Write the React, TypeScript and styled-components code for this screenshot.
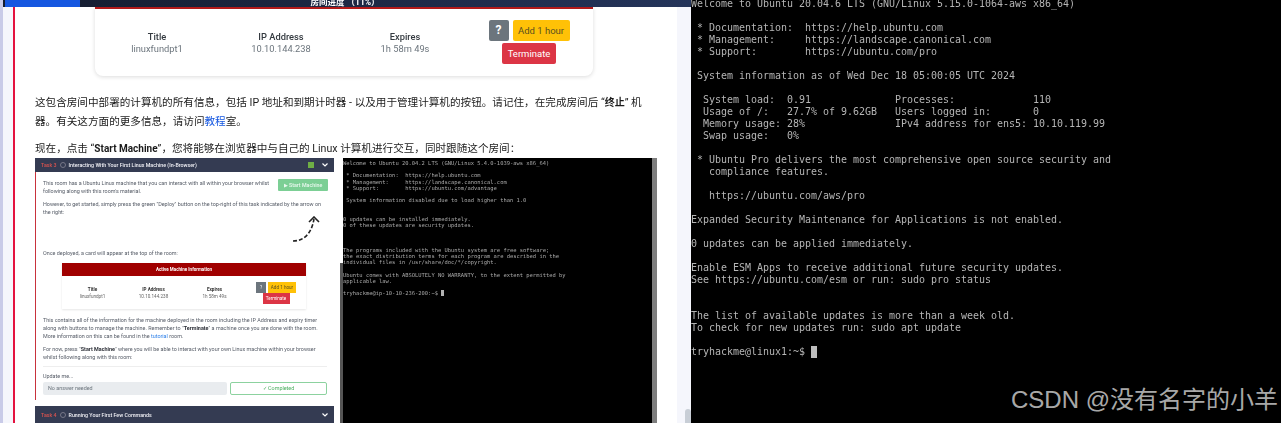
import React from "react";
import styled, { createGlobalStyle } from "styled-components";

const Global = createGlobalStyle`
  html, body { margin: 0; padding: 0; background: #000; }
  body { font-family: "Roboto", "Noto Sans CJK SC", sans-serif; }
`;

const Page = styled.div`
  position: relative;
  width: 1281px;
  height: 423px;
  display: flex;
  overflow: hidden;
`;

const LeftPane = styled.div`
  width: 691px;
  flex: none;
  height: 423px;
  overflow: hidden;
  position: relative;
  background: #f5f6fc;
  display: flex;
  flex-direction: column;
  border-left: 3px solid #c9cbe8;
  box-sizing: border-box;
`;

const ProgressTrack = styled.div`
  height: 7px;
  flex: none;
  background: linear-gradient(90deg, #141c2e, #24345a);
  display: flex;
  justify-content: center;
  position: relative;
  overflow: hidden;
`;

const ProgressFill = styled.div`
  position: absolute;
  left: 2px;
  top: 0;
  bottom: 0;
  width: 75px;
  background: #1557e0;
`;

const ProgressLabel = styled.span`
  color: #fff;
  font: 700 8.5px/5px "Roboto", "Noto Sans CJK SC", sans-serif;
  position: relative;
  margin-left: -4px;
  filter: blur(0.3px);
`;

const Sheet = styled.div`
  width: 664px;
  margin-left: 10px;
  flex: 1;
  background: #fff;
  border-left: 2px solid #e4123f;
  box-sizing: border-box;
  padding-left: 20px;
  min-height: 0;
`;

const Card = styled.div`
  width: 498px;
  height: 69px;
  margin-left: 60px;
  border-top: 2px solid #b11a1a;
  border-radius: 0 0 8px 8px;
  box-shadow: 0 1px 4px rgba(0, 0, 0, 0.14);
  box-sizing: border-box;
  display: flex;
  background: #fff;
`;

const InfoCol = styled.div`
  width: 124px;
  text-align: center;
  padding-top: 22px;
  font: 400 9.3px/12px "Roboto", sans-serif;
  color: #6c757d;
  filter: blur(0.25px);
`;

const InfoHead = styled.div`
  color: #343a40;
  font-weight: 500;
`;

const Actions = styled.div`
  margin-left: 21px;
  width: 82px;
  padding-top: 11px;
  display: flex;
  flex-wrap: wrap;
  justify-content: center;
  align-content: flex-start;
  gap: 2px 4px;
`;

const Btn = styled.div<{ $bg: string; $fg: string; $w: number }>`
  width: ${(p) => p.$w}px;
  height: 21px;
  border-radius: 2px;
  background: ${(p) => p.$bg};
  color: ${(p) => p.$fg};
  font: 400 9.5px/21px "Roboto", sans-serif;
  text-align: center;
`;

const QIcon = styled.span`
  font: 700 12px/21px "Roboto", sans-serif;
`;

const Para = styled.p<{ $top: number }>`
  margin: ${(p) => p.$top}px 0 0;
  width: 612px;
  font: 400 10.6px/19px "Roboto", "Noto Sans CJK SC", sans-serif;
  color: #1b1b1b;
  filter: blur(0.25px);
  strong { font-weight: 700; font-size: 10px; }
  a { color: #1557e0; text-decoration: none; }
`;

const Shot = styled.div`
  display: flex;
  width: 622px;
  height: 265px;
  overflow: hidden;
`;

const Room = styled.div`
  width: 308px;
  flex: none;
  background: #fff;
  position: relative;
  filter: blur(0.5px);
`;

const RoomBar = styled.div`
  width: 299px;
  height: 14px;
  background: #343b52;
  display: flex;
  align-items: center;
  padding: 0 6px;
  box-sizing: border-box;
  font: 500 5.3px/14px "Roboto", sans-serif;
  color: #f0f0f5;
  gap: 2px;
  em { font-style: normal; color: #d9534f; }
`;

const Ring = styled.i`
  width: 4px;
  height: 4px;
  border: 1px solid #778;
  border-radius: 50%;
  margin: 0 1px;
`;

const Spacer = styled.span`
  flex: 1;
`;

const Save = styled.i`
  width: 6px;
  height: 6px;
  background: #6fae45;
  margin-right: 6px;
`;

const Chevron = styled.svg`
  width: 6px;
  height: 4px;
`;

const RoomBody = styled.div`
  width: 299px;
  height: 228px;
  border-left: 1px solid #c8323c;
  box-sizing: border-box;
  padding: 7px 7px 0 7px;
  position: relative;
  font: 400 5.42px/8px "Roboto", sans-serif;
  color: #555b66;
`;

const RoomPara = styled.p<{ $top?: number; $w?: number }>`
  margin: ${(p) => p.$top ?? 0}px 0 0;
  width: ${(p) => p.$w ?? 286}px;
  strong { color: #2d3038; }
  a { color: #2f80e8; text-decoration: none; }
`;

const StartButton = styled.div`
  position: absolute;
  top: 7px;
  right: 6px;
  width: 50px;
  height: 12px;
  background: #7ccf95;
  color: #e8f8ee;
  font: 500 5.3px/12px "Roboto", sans-serif;
  text-align: center;
  border-radius: 1px;
`;

const Arrow = styled.svg`
  position: absolute;
  left: 256px;
  top: 44px;
  width: 30px;
  height: 28px;
`;

const MiniCard = styled.div`
  width: 244px;
  height: 46px;
  margin: 6px 0 0 19px;
  box-shadow: 0 1px 2px rgba(0, 0, 0, 0.1);
  position: relative;
`;

const MiniHead = styled.div`
  height: 13px;
  background: #a00000;
  color: #fff;
  text-align: center;
  font: 700 4.5px/13px "Roboto", sans-serif;
`;

const MiniRow = styled.div`
  display: flex;
  padding-top: 10px;
`;

const MiniCol = styled.div`
  width: 61px;
  text-align: center;
  font: 400 4.6px/7px "Roboto", sans-serif;
  color: #666;
  b { display: block; color: #333; }
`;

const MiniActions = styled.div`
  position: absolute;
  left: 193px;
  top: 19px;
  width: 42px;
  display: flex;
  flex-wrap: wrap;
  justify-content: center;
  gap: 0 2px;
`;

const MiniBtn = styled.div<{ $bg: string; $fg: string; $w: number }>`
  width: ${(p) => p.$w}px;
  height: 11px;
  background: ${(p) => p.$bg};
  color: ${(p) => p.$fg};
  font: 400 4.6px/11px "Roboto", sans-serif;
  text-align: center;
`;

const Rule = styled.div`
  height: 1px;
  background: #eee;
  margin-top: 5px;
`;

const AnswerRow = styled.div`
  display: flex;
  gap: 3px;
  margin-top: 2px;
`;

const AnswerInput = styled.div`
  width: 186px;
  height: 13px;
  background: #e9ecef;
  border-radius: 2px;
  padding-left: 5px;
  box-sizing: border-box;
  font: 400 5.4px/13px "Roboto", sans-serif;
  color: #6c757d;
`;

const AnswerDone = styled.div`
  width: 98px;
  height: 13px;
  border: 1px solid #8cd29f;
  border-radius: 2px;
  box-sizing: border-box;
  font: 400 5.4px/11px "Roboto", sans-serif;
  text-align: center;
  color: #4caf60;
`;

const NextBar = styled(RoomBar)`
  height: 17px;
  margin-top: 6px;
`;

const RoomScroll = styled.div`
  position: absolute;
  right: 0;
  top: 105px;
  bottom: 0;
  width: 3px;
  background: #555;
`;

const MiniTerm = styled.div`
  width: 309px;
  flex: none;
  background: #000;
  color: #a8a8a8;
  overflow: hidden;
`;

const MiniPre = styled.pre`
  margin: 0;
  font: 400 5.45px/6.2px "DejaVu Sans Mono", monospace;
  padding-top: 2px;
  filter: blur(0.4px);
`;

const MiniCursor = styled.span`
  display: inline-block;
  width: 3px;
  height: 6px;
  background: #b4b4b4;
  vertical-align: top;
`;

const TermScroll = styled.div`
  width: 5px;
  flex: none;
  background: #7d7d7d;
`;

const PageScroll = styled.div`
  position: absolute;
  right: 0;
  bottom: 0;
  width: 6px;
  height: 14px;
  background: #c8ced6;
  border-radius: 3px 3px 0 0;
`;

const Terminal = styled.div`
  flex: 1;
  background: #000;
  overflow: hidden;
`;

const TermPre = styled.pre`
  margin: -2px 0 0;
  font: 400 9.97px/12px "DejaVu Sans Mono", monospace;
  color: #b5b5b5;
  filter: blur(0.2px);
`;

const Cursor = styled.span`
  display: inline-block;
  width: 6px;
  height: 12px;
  background: #bdbdbd;
  vertical-align: top;
`;

const Watermark = styled.div`
  position: absolute;
  right: 3px;
  bottom: 8px;
  font: 400 24px/30px "Liberation Sans", "Noto Sans CJK SC", sans-serif;
  color: rgba(255, 255, 255, 0.68);
  white-space: nowrap;
`;

const miniText = `Welcome to Ubuntu 20.04.2 LTS (GNU/Linux 5.4.0-1039-aws x86_64)

 * Documentation:  https://help.ubuntu.com
 * Management:     https://landscape.canonical.com
 * Support:        https://ubuntu.com/advantage

 System information disabled due to load higher than 1.0


0 updates can be installed immediately.
0 of these updates are security updates.



The programs included with the Ubuntu system are free software;
the exact distribution terms for each program are described in the
individual files in /usr/share/doc/*/copyright.

Ubuntu comes with ABSOLUTELY NO WARRANTY, to the extent permitted by
applicable law.

tryhackme@ip-10-10-236-200:~$ `;

const termText = `Welcome to Ubuntu 20.04.6 LTS (GNU/Linux 5.15.0-1064-aws x86_64)

 * Documentation:  https://help.ubuntu.com
 * Management:     https://landscape.canonical.com
 * Support:        https://ubuntu.com/pro

 System information as of Wed Dec 18 05:00:05 UTC 2024

  System load:  0.91              Processes:             110
  Usage of /:   27.7% of 9.62GB   Users logged in:       0
  Memory usage: 28%               IPv4 address for ens5: 10.10.119.99
  Swap usage:   0%

 * Ubuntu Pro delivers the most comprehensive open source security and
   compliance features.

   https://ubuntu.com/aws/pro

Expanded Security Maintenance for Applications is not enabled.

0 updates can be applied immediately.

Enable ESM Apps to receive additional future security updates.
See https://ubuntu.com/esm or run: sudo pro status


The list of available updates is more than a week old.
To check for new updates run: sudo apt update

tryhackme@linux1:~$ `;

const TaskChevron = () => (
  <Chevron viewBox="0 0 6 4">
    <path d="M0.5 0.5 L3 3 L5.5 0.5" fill="none" stroke="#fff" strokeWidth="1.2" />
  </Chevron>
);

export default function App() {
  return (
    <Page>
      <Global />
      <LeftPane>
        <ProgressTrack>
          <ProgressFill />
          <ProgressLabel>房间进度 （11%）</ProgressLabel>
        </ProgressTrack>
        <Sheet>
          <Card>
            <InfoCol>
              <InfoHead>Title</InfoHead>
              linuxfundpt1
            </InfoCol>
            <InfoCol>
              <InfoHead>IP Address</InfoHead>
              10.10.144.238
            </InfoCol>
            <InfoCol>
              <InfoHead>Expires</InfoHead>
              1h 58m 49s
            </InfoCol>
            <Actions>
              <Btn $bg="#6c757d" $fg="#fff" $w={20}>
                <QIcon>?</QIcon>
              </Btn>
              <Btn $bg="#ffc107" $fg="#5b5020" $w={57}>
                Add 1 hour
              </Btn>
              <Btn $bg="#dc3545" $fg="#fff" $w={54}>
                Terminate
              </Btn>
            </Actions>
          </Card>
          <Para $top={17}>
            这包含房间中部署的计算机的所有信息，包括 IP 地址和到期计时器 - 以及用于管理计算机的按钮。请记住，在完成房间后 “<strong>终止</strong>” 机器。有关这方面的更多信息，请访问<a>教程</a>室。
          </Para>
          <Para $top={8}>
            现在，点击 “<strong>Start Machine</strong>”，您将能够在浏览器中与自己的 Linux 计算机进行交互，同时跟随这个房间：
          </Para>
          <Shot>
            <Room>
              <RoomBar>
                <em>Task 3</em>
                <Ring />
                Interacting With Your First Linux Machine (In-Browser)
                <Spacer />
                <Save />
                <TaskChevron />
              </RoomBar>
              <RoomBody>
                <RoomPara $w={228}>
                  This room has a Ubuntu Linux machine that you can interact with all within your browser whilst following along with this room's material.
                </RoomPara>
                <StartButton>▶ Start Machine</StartButton>
                <RoomPara $top={5}>
                  However, to get started, simply press the green "Deploy" button on the top-right of this task indicated by the arrow on the right:
                </RoomPara>
                <Arrow viewBox="0 0 30 28">
                  <path d="M1 25 C10 25 19 20 22 3" fill="none" stroke="#222" strokeWidth="1.6" strokeDasharray="4 2" />
                  <path d="M17 6 L22 1 L27 6" fill="none" stroke="#222" strokeWidth="1.6" />
                </Arrow>
                <RoomPara $top={33}>Once deployed, a card will appear at the top of the room:</RoomPara>
                <MiniCard>
                  <MiniHead>Active Machine Information</MiniHead>
                  <MiniRow>
                    <MiniCol>
                      <b>Title</b>linuxfundpt1
                    </MiniCol>
                    <MiniCol>
                      <b>IP Address</b>10.10.144.238
                    </MiniCol>
                    <MiniCol>
                      <b>Expires</b>1h 58m 49s
                    </MiniCol>
                  </MiniRow>
                  <MiniActions>
                    <MiniBtn $bg="#6c757d" $fg="#fff" $w={10}>?</MiniBtn>
                    <MiniBtn $bg="#ffc107" $fg="#5b5020" $w={28}>Add 1 hour</MiniBtn>
                    <MiniBtn $bg="#dc3545" $fg="#fff" $w={27}>Terminate</MiniBtn>
                  </MiniActions>
                </MiniCard>
                <RoomPara $top={7}>
                  This contains all of the information for the machine deployed in the room including the IP Address and expiry timer along with buttons to manage the machine. Remember to "<strong>Terminate</strong>" a machine once you are done with the room. More information on this can be found in the <a>tutorial</a> room.
                </RoomPara>
                <RoomPara $top={5}>
                  For now, press "<strong>Start Machine</strong>" where you will be able to interact with your own Linux machine within your browser whilst following along with this room:
                </RoomPara>
                <Rule />
                <RoomPara $top={5}>Update me...</RoomPara>
                <AnswerRow>
                  <AnswerInput>No answer needed</AnswerInput>
                  <AnswerDone>✓ Completed</AnswerDone>
                </AnswerRow>
              </RoomBody>
              <NextBar>
                <em>Task 4</em>
                <Ring />
                Running Your First Few Commands
                <Spacer />
                <TaskChevron />
              </NextBar>
              <RoomScroll />
            </Room>
            <MiniTerm>
              <MiniPre>
                {miniText}
                <MiniCursor />
              </MiniPre>
            </MiniTerm>
            <TermScroll />
          </Shot>
        </Sheet>
        <PageScroll />
      </LeftPane>
      <Terminal>
        <TermPre>
          {termText}
          <Cursor />
        </TermPre>
      </Terminal>
      <Watermark>CSDN @没有名字的小羊</Watermark>
    </Page>
  );
}
